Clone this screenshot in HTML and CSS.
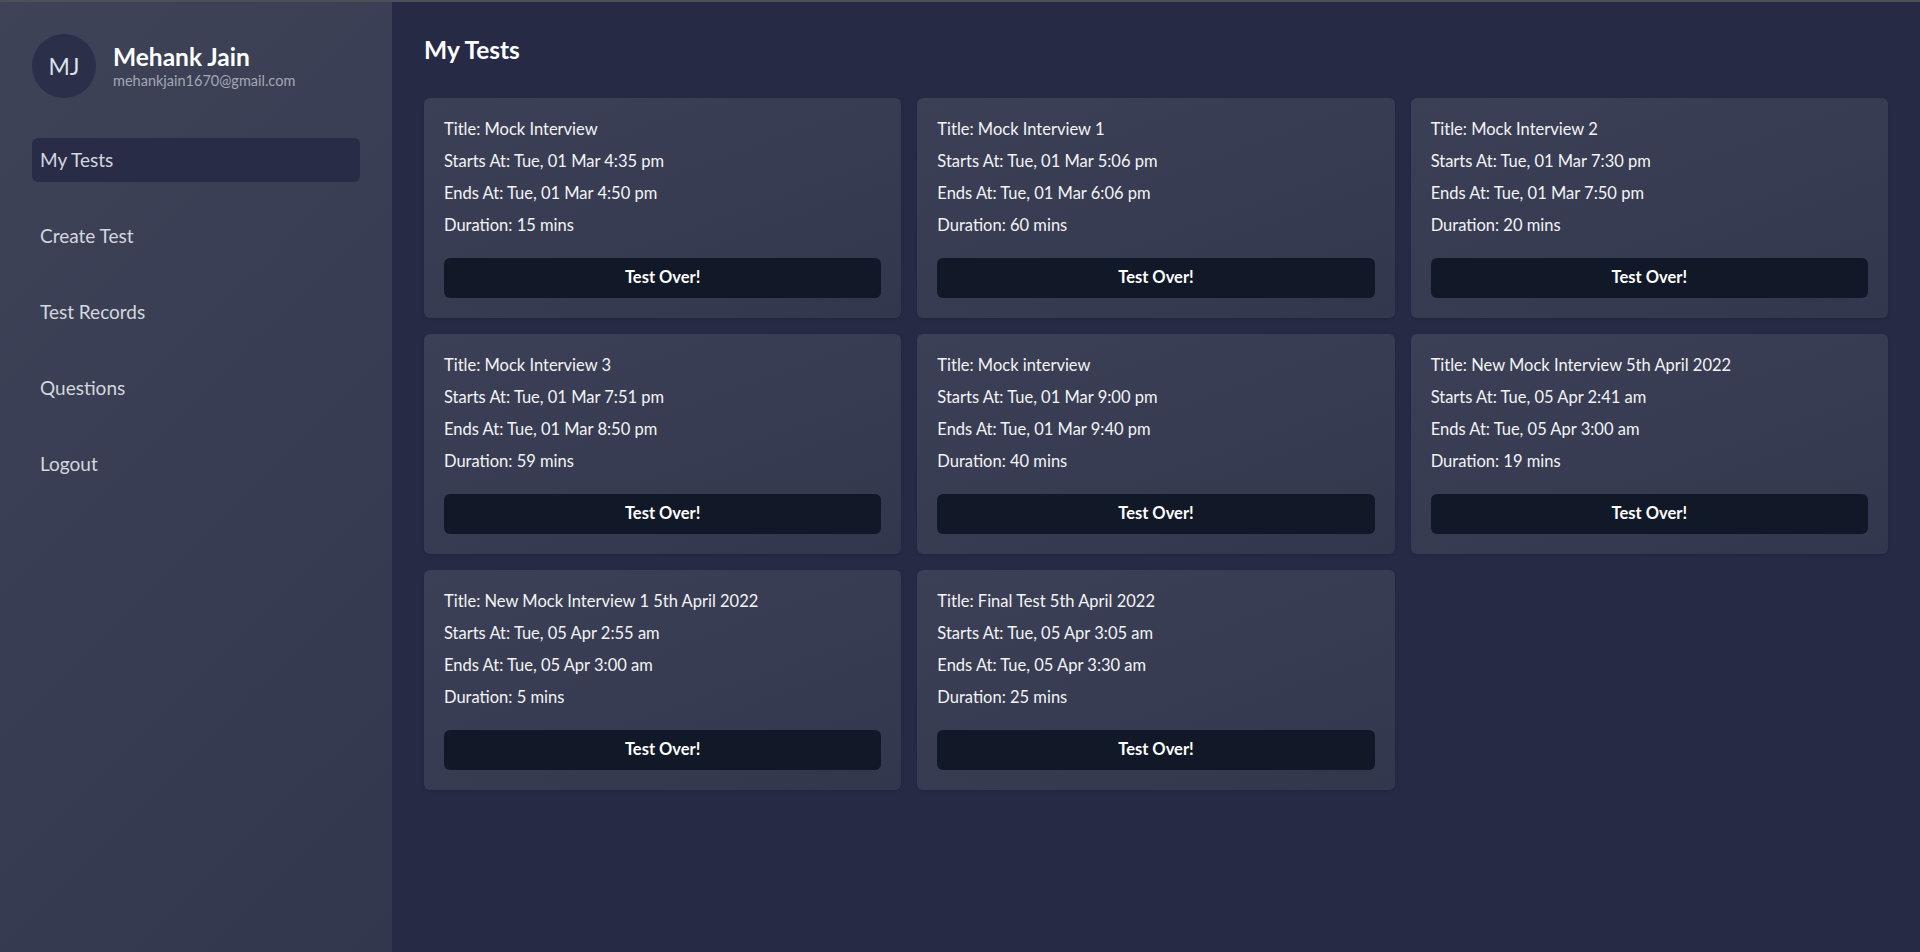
FILE: index.html
```html
<!DOCTYPE html>
<html lang="en">
<head>
<meta charset="utf-8">
<title>My Tests</title>
<link rel="stylesheet" href="styles.css">
</head>
<body>
<div class="app">
  <aside class="sidebar">
    <div class="profile">
      <div class="avatar">MJ</div>
      <div class="profile-info">
        <div class="name">Mehank Jain</div>
        <div class="email">mehankjain1670@gmail.com</div>
      </div>
    </div>
    <nav class="nav">
      <a class="nav-item active">My Tests</a>
      <a class="nav-item">Create Test</a>
      <a class="nav-item">Test Records</a>
      <a class="nav-item">Questions</a>
      <a class="nav-item">Logout</a>
    </nav>
  </aside>
  <main class="main">
    <h1 class="page-title">My Tests</h1>
    <div class="grid">
      <div class="card">
        <p>Title: Mock Interview</p>
        <p>Starts At: Tue, 01 Mar 4:35 pm</p>
        <p>Ends At: Tue, 01 Mar 4:50 pm</p>
        <p>Duration: 15 mins</p>
        <button class="btn">Test Over!</button>
      </div>
      <div class="card">
        <p>Title: Mock Interview 1</p>
        <p>Starts At: Tue, 01 Mar 5:06 pm</p>
        <p>Ends At: Tue, 01 Mar 6:06 pm</p>
        <p>Duration: 60 mins</p>
        <button class="btn">Test Over!</button>
      </div>
      <div class="card">
        <p>Title: Mock Interview 2</p>
        <p>Starts At: Tue, 01 Mar 7:30 pm</p>
        <p>Ends At: Tue, 01 Mar 7:50 pm</p>
        <p>Duration: 20 mins</p>
        <button class="btn">Test Over!</button>
      </div>
      <div class="card">
        <p>Title: Mock Interview 3</p>
        <p>Starts At: Tue, 01 Mar 7:51 pm</p>
        <p>Ends At: Tue, 01 Mar 8:50 pm</p>
        <p>Duration: 59 mins</p>
        <button class="btn">Test Over!</button>
      </div>
      <div class="card">
        <p>Title: Mock interview</p>
        <p>Starts At: Tue, 01 Mar 9:00 pm</p>
        <p>Ends At: Tue, 01 Mar 9:40 pm</p>
        <p>Duration: 40 mins</p>
        <button class="btn">Test Over!</button>
      </div>
      <div class="card">
        <p>Title: New Mock Interview 5th April 2022</p>
        <p>Starts At: Tue, 05 Apr 2:41 am</p>
        <p>Ends At: Tue, 05 Apr 3:00 am</p>
        <p>Duration: 19 mins</p>
        <button class="btn">Test Over!</button>
      </div>
      <div class="card">
        <p>Title: New Mock Interview 1 5th April 2022</p>
        <p>Starts At: Tue, 05 Apr 2:55 am</p>
        <p>Ends At: Tue, 05 Apr 3:00 am</p>
        <p>Duration: 5 mins</p>
        <button class="btn">Test Over!</button>
      </div>
      <div class="card">
        <p>Title: Final Test 5th April 2022</p>
        <p>Starts At: Tue, 05 Apr 3:05 am</p>
        <p>Ends At: Tue, 05 Apr 3:30 am</p>
        <p>Duration: 25 mins</p>
        <button class="btn">Test Over!</button>
      </div>
    </div>
  </main>
</div>
</body>
</html>
```

FILE: styles.css
```css
* { box-sizing: border-box; }

html, body {
  margin: 0;
  padding: 0;
  height: 100%;
}

body {
  font-family: Lato, "Noto Sans", sans-serif;
  background: #262a45;
  color: #f3f4f6;
  border-top: 2px solid #4e4f54;
  overflow: hidden;
}

.app {
  display: flex;
  height: 950px;
}

.sidebar {
  width: 392px;
  flex-shrink: 0;
  padding: 32px 32px;
  background: linear-gradient(135deg, #3e4358 0%, #383d53 50%, #33374e 100%);
}

.profile {
  display: flex;
  align-items: center;
  gap: 17px;
}

.avatar {
  width: 64px;
  height: 64px;
  border-radius: 50%;
  background: #2b2f4a;
  color: #dde1ea;
  display: flex;
  align-items: center;
  justify-content: center;
  font-size: 23px;
  font-weight: 400;
}

.profile-info {
  display: flex;
  flex-direction: column;
  padding-top: 0;
}

.name {
  font-size: 24.5px;
  font-weight: 700;
  line-height: 30px;
  color: #ffffff;
}

.email {
  font-size: 14.5px;
  line-height: 18px;
  color: #a3a8b4;
}

.nav {
  margin-top: 40px;
  display: flex;
  flex-direction: column;
  gap: 32px;
}

.nav-item {
  display: block;
  height: 44px;
  line-height: 43px;
  padding: 0 8px;
  border-radius: 6px;
  font-size: 19px;
  color: #d4d7de;
}

.nav-item.active {
  background: #282c47;
}

.main {
  flex: 1;
  padding: 32px 32px;
}

.page-title {
  margin: 0 0 32px;
  font-size: 24.5px;
  line-height: 32px;
  font-weight: 700;
  color: #ffffff;
}

.grid {
  display: grid;
  grid-template-columns: repeat(3, 1fr);
  gap: 16px;
}

.card {
  height: 220px;
  padding: 20px;
  border-radius: 6px;
  background: linear-gradient(160deg, #3c4056 0%, #363b51 60%, #33374e 100%);
  box-shadow: 0 1px 3px rgba(0, 0, 0, 0.15);
  display: flex;
  flex-direction: column;
}

.card p {
  margin: 0 0 8px;
  font-size: 16.5px;
  line-height: 23px;
  padding-bottom: 1px;
  color: #f3f4f6;
}

.btn {
  margin-top: 12px;
  height: 40px;
  padding: 0 0 2px;
  border: none;
  border-radius: 6px;
  background: #111827;
  color: #ffffff;
  font-family: inherit;
  font-size: 16.5px;
  font-weight: 700;
}
```
